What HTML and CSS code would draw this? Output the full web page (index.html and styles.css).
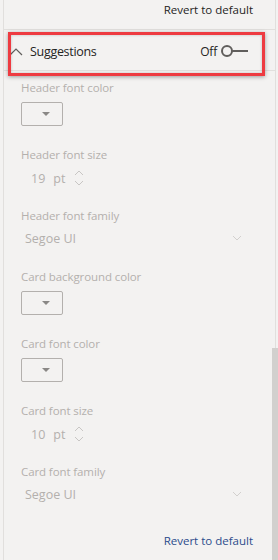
FILE: index.html
```html
<!DOCTYPE html>
<html lang="en">
<head>
    <meta charset="UTF-8">
    <meta name="viewport" content="width=device-width, initial-scale=1.0">
    <title>Format - Suggestions</title>
    <link rel="stylesheet" href="styles.css">
</head>
<body>
    <div class="pane">
        <div class="revert-row top">
            <span class="revert">Revert to default</span>
        </div>

        <div class="card-header">
            <svg class="chevron-up" width="14" height="8" viewBox="0 0 14 8">
                <polyline points="1,7 7,1 13,7" fill="none" stroke="#605e5c" stroke-width="1.2"/>
            </svg>
            <span class="card-title">Suggestions</span>
            <span class="toggle-text">Off</span>
            <svg class="toggle" width="30" height="14" viewBox="0 0 30 14">
                <circle cx="7" cy="7" r="5" fill="none" stroke="#605e5c" stroke-width="2"/>
                <line x1="12" y1="7" x2="28" y2="7" stroke="#605e5c" stroke-width="2"/>
            </svg>
            <div class="highlight"></div>
        </div>

        <div class="card-body">
            <div class="field">
                <span class="label">Header font color</span>
                <div class="color-picker"><span class="caret"></span></div>
            </div>

            <div class="field">
                <span class="label">Header font size</span>
                <div class="spin-row">
                    <span class="spin-value">19</span>
                    <span class="spin-unit">pt</span>
                    <svg class="spin-arrows" width="12" height="18" viewBox="0 0 12 18">
                        <polyline points="2,6 6,2 10,6" fill="none" stroke="#c8c6c4" stroke-width="1"/>
                        <polyline points="2,12 6,16 10,12" fill="none" stroke="#c8c6c4" stroke-width="1"/>
                    </svg>
                </div>
            </div>

            <div class="field">
                <span class="label">Header font family</span>
                <div class="select-row">
                    <span class="select-value">Segoe UI</span>
                    <svg width="10" height="6" viewBox="0 0 10 6">
                        <polyline points="1,1 5,5 9,1" fill="none" stroke="#d2d0ce" stroke-width="1"/>
                    </svg>
                </div>
            </div>

            <div class="field">
                <span class="label">Card background color</span>
                <div class="color-picker"><span class="caret"></span></div>
            </div>

            <div class="field">
                <span class="label">Card font color</span>
                <div class="color-picker"><span class="caret"></span></div>
            </div>

            <div class="field">
                <span class="label">Card font size</span>
                <div class="spin-row">
                    <span class="spin-value">10</span>
                    <span class="spin-unit">pt</span>
                    <svg class="spin-arrows" width="12" height="18" viewBox="0 0 12 18">
                        <polyline points="2,6 6,2 10,6" fill="none" stroke="#c8c6c4" stroke-width="1"/>
                        <polyline points="2,12 6,16 10,12" fill="none" stroke="#c8c6c4" stroke-width="1"/>
                    </svg>
                </div>
            </div>

            <div class="field">
                <span class="label">Card font family</span>
                <div class="select-row">
                    <span class="select-value">Segoe UI</span>
                    <svg width="10" height="6" viewBox="0 0 10 6">
                        <polyline points="1,1 5,5 9,1" fill="none" stroke="#d2d0ce" stroke-width="1"/>
                    </svg>
                </div>
            </div>

            <div class="revert-row bottom">
                <span class="revert link">Revert to default</span>
            </div>
        </div>
        <div class="scroll-thumb"></div>
    </div>
</body>
</html>
```

FILE: styles.css
```css
html, body {
    margin: 0;
    padding: 0;
    height: 100%;
}
body {
    font-family: "Segoe UI", "Open Sans", sans-serif;
    background-color: #f3f2f1;
    color: #252423;
    overflow: hidden;
}
.pane {
    position: relative;
    margin-left: 3px;
    width: 271px;
    height: 560px;
    border-left: 1px solid #e1dfdd;
    border-right: 1px solid #e1dfdd;
}
.revert-row {
    display: flex;
    justify-content: flex-end;
    padding-right: 22px;
}
.revert-row.top {
    height: 28px;
    padding-top: 1px;
    border-bottom: 1px solid #e1dfdd;
}
.revert-row.bottom {
    margin-top: 7px;
}
.revert {
    font-size: 11.5px;
    line-height: 18px;
    color: #252423;
}
.revert.link {
    color: #2b4c8c;
}
.card-header {
    position: relative;
    display: flex;
    align-items: center;
    height: 38px;
    padding-top: 2px;
    padding-left: 5px;
    padding-right: 25px;
    border-bottom: 1px solid #e1dfdd;
}
.chevron-up {
    margin-right: 7px;
    margin-top: 1px;
}
.card-title {
    flex: 1;
    font-size: 12.5px;
    letter-spacing: -0.3px;
    color: #252423;
}
.toggle-text {
    font-size: 12px;
    letter-spacing: -0.2px;
    margin-right: 3px;
}
.highlight {
    position: absolute;
    left: 4px;
    top: 2px;
    width: 251px;
    height: 38px;
    border: 3px solid #ee3b41;
    box-shadow: 0 1px 4px rgba(0, 0, 0, 0.35), inset 0 0 3px rgba(0, 0, 0, 0.2);
}
.card-body {
    display: flex;
    flex-direction: column;
    padding: 9px 0 0 17px;
}
.field {
    display: flex;
    flex-direction: column;
    margin-bottom: 21px;
}
.label {
    font-size: 11.5px;
    letter-spacing: -0.1px;
    line-height: 16px;
    color: #b3b0ad;
}
.color-picker {
    display: flex;
    align-items: center;
    justify-content: flex-end;
    margin-top: 6px;
    border: 1px solid #b3b0ad;
    border-radius: 2px;
    padding-right: 12px;
    box-sizing: border-box;
    width: 42px;
    height: 24px;
}
.caret {
    width: 0;
    height: 0;
    border-left: 4px solid transparent;
    border-right: 4px solid transparent;
    border-top: 4px solid #8a8886;
}
.spin-row {
    display: flex;
    align-items: center;
    margin-top: 6px;
    height: 18px;
    padding-left: 10px;
    color: #b3b0ad;
    font-size: 12.5px;
}
.spin-unit {
    margin-left: 8px;
}
.spin-arrows {
    margin-left: 8px;
}
.select-row {
    display: flex;
    align-items: center;
    justify-content: space-between;
    margin-top: 4px;
    height: 20px;
    width: 221px;
    padding-left: 4px;
    box-sizing: border-box;
}
.select-value {
    font-size: 12.5px;
    color: #b3b0ad;
}
.scroll-thumb {
    position: absolute;
    right: -4px;
    top: 348px;
    width: 7px;
    height: 212px;
    background: #d2d0ce;
}
```
